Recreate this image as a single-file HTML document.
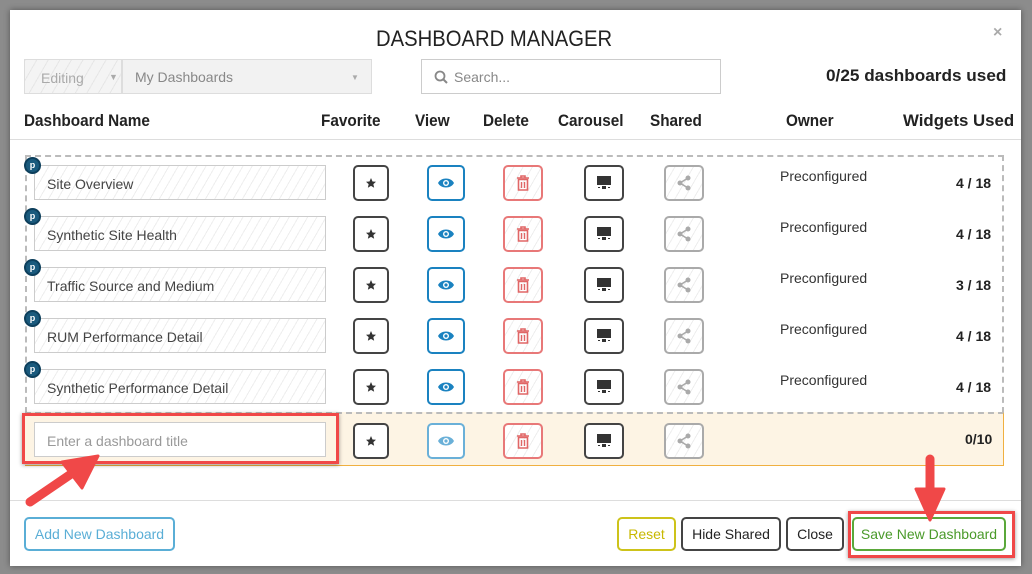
<!DOCTYPE html>
<html><head><meta charset="utf-8"><style>
*{box-sizing:border-box;margin:0;padding:0}
body{width:1032px;height:574px;overflow:hidden;background:#8c8c8c;font-family:"Liberation Sans",sans-serif;position:relative;color:#222}
.modal{position:absolute;left:10px;top:10px;width:1011px;height:556px;background:#fff;box-shadow:0 0 6px rgba(0,0,0,.4)}
.a{position:absolute}
.t{font-size:22px;letter-spacing:0;color:#222;transform:scaleX(.92);transform-origin:left}
.h{font-size:17px;font-weight:bold;top:111px;transform:scaleX(.9);transform-origin:left;color:#222}
.inp{position:absolute;left:34px;width:292px;height:35px;border:1px solid #ccc;background:repeating-linear-gradient(-60deg,#fff 0 7px,#eee 7px 8px);font-size:14px;color:#444;padding:10px 12px}
.b{position:absolute;width:36px;height:36px;border:2px solid #444;border-radius:5px;background:#fff;display:flex;align-items:center;justify-content:center}
.pc{position:absolute;left:780px;font-size:14px;color:#333}
.wu{position:absolute;left:956px;font-size:14px;font-weight:bold;color:#222}
.p{position:absolute;left:24px;width:17px;height:17px;border-radius:50%;background:#1a5a7d;border:2px solid #0d3f5c;color:#fff;font-size:9px;font-weight:bold;text-align:center;line-height:13px}
.btn{position:absolute;top:517px;height:34px;border:2px solid #444;border-radius:5px;background:#fff;font-size:14px;display:flex;align-items:center;justify-content:center}
</style></head><body>
<div class="modal"></div>
<div class="a t" style="left:376px;top:26px">DASHBOARD MANAGER</div>
<div class="a" style="left:993px;top:24px;color:#aaa;font-size:16px;font-weight:bold">×</div>
<div class="a" style="left:24px;top:59px;width:98px;height:35px;border:1px solid #ddd;background:repeating-linear-gradient(-60deg,#f4f4f4 0 9px,#e6e6e6 9px 10px);font-size:14px;color:#aaa;padding:10px 16px">Editing <span style="font-size:9px;position:absolute;left:84px;top:12px">▼</span></div>
<div class="a" style="left:122px;top:59px;width:250px;height:35px;border:1px solid #ddd;background:#f2f2f2;font-size:14px;color:#888;padding:9px 12px">My Dashboards<span style="font-size:8px;position:absolute;left:228px;top:13px;color:#aaa">▼</span></div>
<div class="a" style="left:421px;top:59px;width:300px;height:35px;border:1px solid #ccc;font-size:14px;color:#888;padding:9px 12px">
<svg width="14" height="14" viewBox="0 0 14 14" style="vertical-align:-2px;margin-right:6px"><circle cx="6" cy="6" r="4.5" fill="none" stroke="#888" stroke-width="1.8"/><path d="M9.5 9.5L13 13" stroke="#888" stroke-width="2"/></svg>Search...</div>
<div class="a" style="left:826px;top:66px;font-size:17px;font-weight:bold;transform:scaleX(1.01);transform-origin:left">0/25 dashboards used</div>
<div class="a h" style="left:24px">Dashboard Name</div>
<div class="a h" style="left:321px">Favorite</div>
<div class="a h" style="left:415px">View</div>
<div class="a h" style="left:483px">Delete</div>
<div class="a h" style="left:558px">Carousel</div>
<div class="a h" style="left:650px">Shared</div>
<div class="a h" style="left:786px">Owner</div>
<div class="a h" style="left:903px;transform:scaleX(.99)">Widgets Used</div>
<div class="a" style="left:10px;top:139px;width:1011px;height:1px;background:#ddd"></div>
<div class="a" style="left:25px;top:155px;width:979px;height:258px;border:2px dashed #bbb;border-bottom:none"></div>
<div class="a" style="left:25px;top:412px;width:979px;height:54px;background:#fdf4e4;border-top:2px dashed #bbb;border-bottom:1px solid #f0b040;border-right:1px solid #f0b040"></div>

<div id="rows"></div>
<script>
var names=["Site Overview","Synthetic Site Health","Traffic Source and Medium","RUM Performance Detail","Synthetic Performance Detail"];
var w=["4 / 18","4 / 18","3 / 18","4 / 18","4 / 18"];
var star='<svg width="12" height="12" viewBox="0 0 24 24"><path d="M12 2l3 7 7 .6-5.3 4.7 1.6 7.2L12 17.8 5.7 21.5l1.6-7.2L2 9.6 9 9z" fill="#333"/></svg>';
function eye(c){return '<svg width="16" height="12" viewBox="0 0 16 12"><path d="M0 6C3 0 13 0 16 6 13 12 3 12 0 6z" fill="'+c+'"/><circle cx="8" cy="6" r="3" fill="#fff"/><circle cx="8" cy="6" r="1.6" fill="'+c+'"/></svg>'}
var trash='<svg width="14" height="16" viewBox="0 0 14 16"><path d="M1 3h12M5 3V1h4v2" stroke="#e06666" stroke-width="1.6" fill="none"/><path d="M2.5 4.5h9V15h-9z" stroke="#e06666" stroke-width="1.6" fill="none"/><path d="M5.5 7v6M8.5 7v6" stroke="#e06666" stroke-width="1.4"/></svg>';
var car='<svg width="16" height="16" viewBox="0 0 16 16"><rect x="1" y="1" width="14" height="9" fill="#333"/><rect x="6" y="11" width="4" height="3" fill="#333"/><rect x="2" y="12" width="2" height="1" fill="#333"/><rect x="12" y="12" width="2" height="1" fill="#333"/></svg>';
var share='<svg width="14" height="16" viewBox="0 0 14 16"><circle cx="11" cy="3" r="2.5" fill="#aaa"/><circle cx="3" cy="8" r="2.5" fill="#aaa"/><circle cx="11" cy="13" r="2.5" fill="#aaa"/><path d="M11 3L3 8l8 5" stroke="#aaa" stroke-width="1.6" fill="none"/></svg>';
var hatch='background:repeating-linear-gradient(-60deg,#fff 0 7px,#eee 7px 8px);';
function btns(y,op){
 return '<div class="b" style="left:353px;top:'+y+'px;width:36px">'+star+'</div>'+
 '<div class="b" style="left:427px;top:'+y+'px;width:38px;border-color:'+(op?'#6ab0d8':'#1a82c0')+'">'+eye(op?'#6ab0d8':'#1a82c0')+'</div>'+
 '<div class="b" style="left:503px;top:'+y+'px;width:40px;border-color:#e87878;'+hatch+'">'+trash+'</div>'+
 '<div class="b" style="left:584px;top:'+y+'px;width:40px">'+car+'</div>'+
 '<div class="b" style="left:664px;top:'+y+'px;width:40px;border-color:#aaa;'+hatch+'">'+share+'</div>';}
var h='';
for(var i=0;i<5;i++){var y=165+i*51;
 h+='<div class="inp" style="top:'+y+'px">'+names[i]+'</div><div class="p" style="top:'+(y-8)+'px">p</div>'+btns(y,false)+
 '<div class="pc" style="top:'+(y+3)+'px">Preconfigured</div><div class="wu" style="top:'+(y+60-50)+'px">'+w[i]+'</div>';}
h+='<div class="a" style="left:22px;top:413px;width:317px;height:51px;border:3px solid #f04848;box-shadow:0 1px 4px rgba(0,0,0,.4)"></div>';
h+='<div class="inp" style="top:422px;background:#fff;color:#999;border-color:#ccc">Enter a dashboard title</div>';
h+=btns(423,true)+'<div class="wu" style="top:431px;left:965px">0/10</div>';
document.getElementById('rows').innerHTML=h;
</script>
<div class="a" style="left:10px;top:500px;width:1011px;height:1px;background:#ddd"></div>
<div class="btn" style="left:24px;width:151px;border-color:#5aaed6;color:#5aaed6">Add New Dashboard</div>
<div class="btn" style="left:617px;width:59px;border-color:#cdc31a;color:#c8b800">Reset</div>
<div class="btn" style="left:681px;width:100px">Hide Shared</div>
<div class="btn" style="left:786px;width:58px">Close</div>
<div class="a" style="left:848px;top:511px;width:167px;height:47px;border:3px solid #f04848;box-shadow:0 1px 4px rgba(0,0,0,.4)"></div>
<div class="btn" style="left:852px;width:154px;border-color:#5aa83a;color:#4a9a2a">Save New Dashboard</div>
<svg class="a" style="left:0;top:0" width="1032" height="574">
<path d="M30 502L74 472" stroke="#f04848" stroke-width="9" stroke-linecap="round"/>
<path d="M98 456L62 462L82 488Z" fill="#f04848" stroke="#f04848" stroke-width="3" stroke-linejoin="round"/>
<path d="M930 459V494" stroke="#f04848" stroke-width="9" stroke-linecap="round"/>
<path d="M916 489L944 489L930 520Z" fill="#f04848" stroke="#f04848" stroke-width="3" stroke-linejoin="round"/>
</svg>
</body></html>
